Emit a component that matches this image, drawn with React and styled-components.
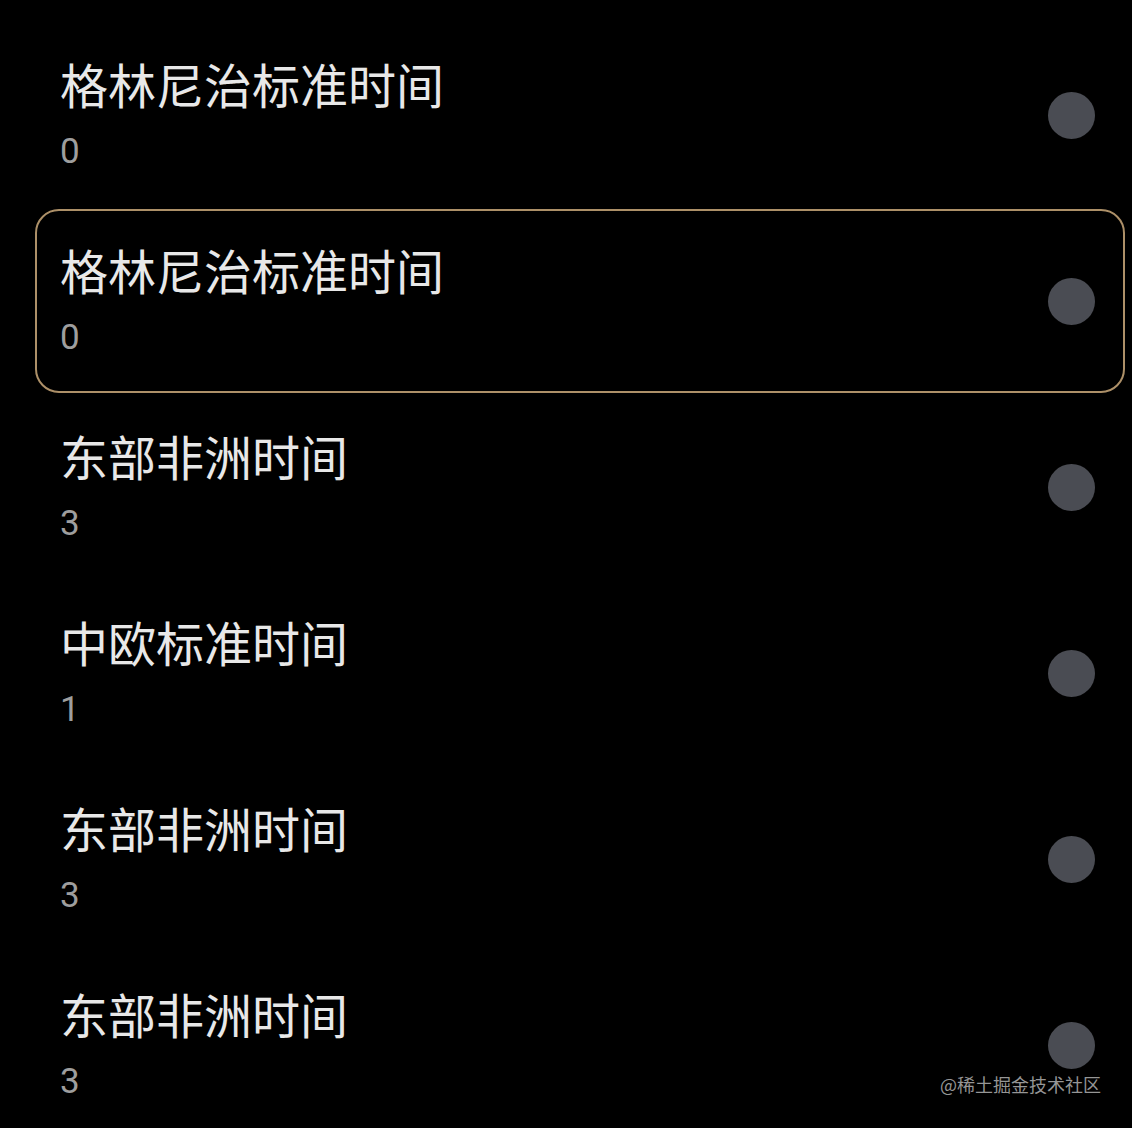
import styled, { createGlobalStyle } from "styled-components";

const ZONES = [
  { name: "格林尼治标准时间", offset: "0" },
  { name: "格林尼治标准时间", offset: "0", active: true },
  { name: "东部非洲时间", offset: "3" },
  { name: "中欧标准时间", offset: "1" },
  { name: "东部非洲时间", offset: "3" },
  { name: "东部非洲时间", offset: "3" },
];

const GlobalStyle = createGlobalStyle`
  html, body {
    margin: 0;
    padding: 0;
    background: #000000;
  }
  body {
    font-family: "Noto Sans CJK SC", Roboto, sans-serif;
  }
`;

function App() {
  return (
    <>
      <GlobalStyle />
      <Screen>
        <List>
          {ZONES.map((zone, i) => (
            <Row key={i} $active={zone.active}>
              <Texts>
                <Title>{zone.name}</Title>
                <Offset>{zone.offset}</Offset>
              </Texts>
              <Dot />
            </Row>
          ))}
        </List>
        <Watermark>@稀土掘金技术社区</Watermark>
      </Screen>
    </>
  );
}

const Screen = styled.div`
  position: relative;
  width: 1132px;
  height: 1128px;
  overflow: hidden;
  background: #000000;
`;

const List = styled.div`
  display: flex;
  flex-direction: column;
  gap: 2px;
  padding: 23px 7px 0 35px;
`;

const Row = styled.div`
  box-sizing: border-box;
  height: 184px;
  display: flex;
  align-items: center;
  justify-content: space-between;
  padding: 0 28px 0 23px;
  border: 2px solid ${(p) => (p.$active ? "#ad9068" : "transparent")};
  border-radius: 24px;
`;

const Texts = styled.div`
  display: flex;
  flex-direction: column;
  padding-bottom: 4px;
`;

const Title = styled.div`
  color: #e8e8e8;
  font-size: 48px;
  line-height: 62px;
  font-family: "Noto Sans CJK SC", sans-serif;
`;

const Offset = styled.div`
  color: #9e9e9e;
  font-size: 35px;
  line-height: 44px;
  margin-top: 16px;
  font-family: Roboto, "Noto Sans CJK SC", sans-serif;
`;

const Dot = styled.div`
  width: 47px;
  height: 47px;
  border-radius: 50%;
  background: #4a4c53;
  flex-shrink: 0;
`;

const Watermark = styled.div`
  position: absolute;
  right: 31px;
  bottom: 31px;
  color: rgba(200, 200, 200, 0.75);
  font-size: 18px;
  font-family: "Noto Sans CJK SC", sans-serif;
`;

export default App;
